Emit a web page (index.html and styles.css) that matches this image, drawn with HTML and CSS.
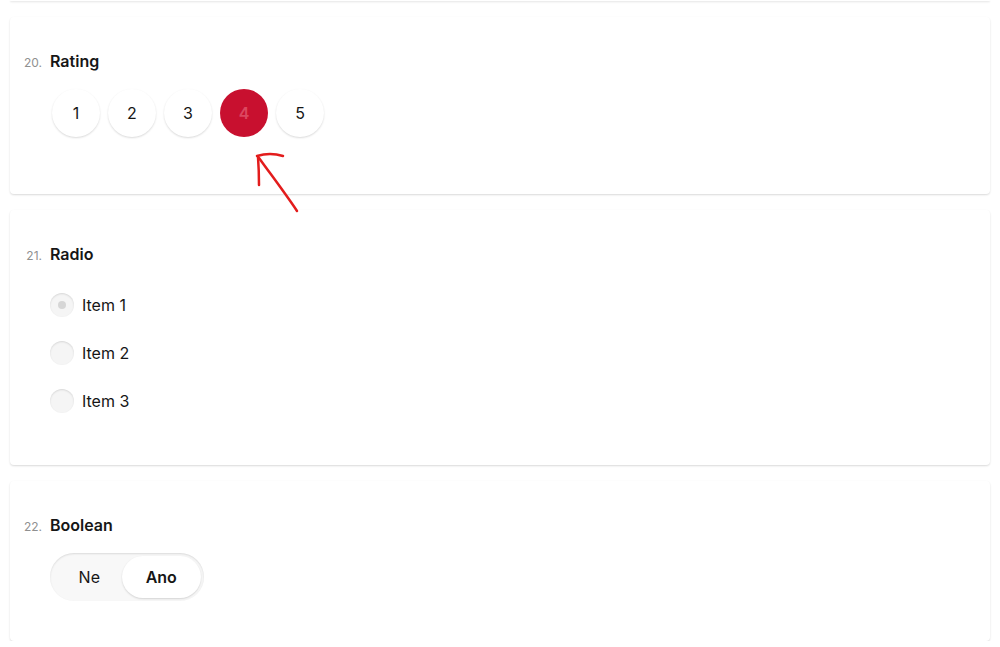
FILE: index.html
```html
<!DOCTYPE html>
<html lang="cs">
<head>
<meta charset="utf-8">
<title>Survey</title>
<link rel="stylesheet" href="styles.css">
</head>
<body>
<div class="page">
  <div class="card stub"></div>

  <div class="card q-rating">
    <div class="q-title"><span class="q-num">20.</span><span class="q-text">Rating</span></div>
    <div class="rating">
      <span class="rate-item">1</span>
      <span class="rate-item">2</span>
      <span class="rate-item">3</span>
      <span class="rate-item selected">4</span>
      <span class="rate-item">5</span>
    </div>
  </div>

  <div class="card q-radio">
    <div class="q-title"><span class="q-num">21.</span><span class="q-text">Radio</span></div>
    <div class="radio-list">
      <div class="radio-row"><span class="radio-dot checked"></span><span class="radio-label">Item 1</span></div>
      <div class="radio-row"><span class="radio-dot"></span><span class="radio-label">Item 2</span></div>
      <div class="radio-row"><span class="radio-dot"></span><span class="radio-label">Item 3</span></div>
    </div>
  </div>

  <div class="card q-bool">
    <div class="q-title"><span class="q-num">22.</span><span class="q-text">Boolean</span></div>
    <div class="toggle">
      <span class="toggle-opt">Ne</span>
      <span class="toggle-thumb">Ano</span>
    </div>
  </div>

  <svg class="annot" width="1000" height="647" viewBox="0 0 1000 647">
    <path d="M297 211 C285 193 272 176 259 158" />
    <path d="M257 156 Q270 152 283 156" />
    <path d="M258 157 Q259 171 259 185" />
  </svg>
</div>
</body>
</html>
```

FILE: styles.css
```css
html, body {
  margin: 0;
  padding: 0;
  background: #ffffff;
}
body {
  font-family: Inter, "Noto Sans", "Liberation Sans", sans-serif;
  color: #161616;
}
.page {
  position: relative;
  padding: 0 10px;
  display: flex;
  flex-direction: column;
  gap: 16px;
}
.card {
  background: #ffffff;
  border-radius: 4px;
  box-shadow: 0 1px 2px rgba(0, 0, 0, 0.15);
  padding: 32px 10px 40px 10px;
  box-sizing: border-box;
}
.stub {
  height: 1px;
  padding: 0;
  border-radius: 0 0 4px 4px;
}
.q-rating { height: 177px; }
.q-radio { height: 255px; }
.q-bool { height: 160px; }
.q-title {
  display: flex;
  align-items: baseline;
  gap: 8px;
  line-height: 24px;
}
.q-num {
  width: 22px;
  text-align: right;
  font-size: 12px;
  color: #909090;
}
.q-text {
  font-size: 16px;
  font-weight: 600;
}
.rating {
  display: flex;
  gap: 8px;
  margin: 14px 0 0 32px;
}
.rate-item {
  width: 48px;
  height: 48px;
  border-radius: 50%;
  background: #ffffff;
  box-shadow: 0 1px 2px rgba(0, 0, 0, 0.15);
  display: flex;
  align-items: center;
  justify-content: center;
  font-size: 16px;
}
.rate-item.selected {
  background: #c8102f;
  color: #dc4760;
  font-weight: 600;
  box-shadow: none;
}
.radio-list {
  margin: 13px 0 0 30px;
  display: flex;
  flex-direction: column;
}
.radio-row {
  display: flex;
  align-items: center;
  gap: 8px;
  height: 48px;
  font-size: 16px;
}
.radio-dot {
  width: 24px;
  height: 24px;
  border-radius: 50%;
  background: #f5f5f5;
  box-shadow: inset 0 1px 2px rgba(0, 0, 0, 0.12);
  display: flex;
  align-items: center;
  justify-content: center;
}
.radio-dot.checked::after {
  content: "";
  width: 8px;
  height: 8px;
  border-radius: 50%;
  background: #d6d6d6;
}
.toggle {
  margin: 14px 0 0 30px;
  width: 154px;
  height: 48px;
  box-sizing: border-box;
  border-radius: 24px;
  background: #f8f8f8;
  box-shadow: inset 0 1px 2px rgba(0, 0, 0, 0.12);
  display: flex;
  align-items: center;
  padding: 3px;
  font-size: 16px;
}
.toggle-opt {
  width: 65px;
  padding-left: 4px;
  text-align: center;
}
.toggle-thumb {
  width: 80px;
  height: 42px;
  border-radius: 21px;
  background: #ffffff;
  box-shadow: 0 1px 2px rgba(0, 0, 0, 0.15);
  display: flex;
  align-items: center;
  justify-content: center;
  font-weight: 600;
}
.annot {
  position: absolute;
  left: 0;
  top: 0;
  pointer-events: none;
}
.annot path {
  fill: none;
  stroke: #e31c1c;
  stroke-width: 2.5;
  stroke-linecap: round;
  stroke-linejoin: round;
}
```
